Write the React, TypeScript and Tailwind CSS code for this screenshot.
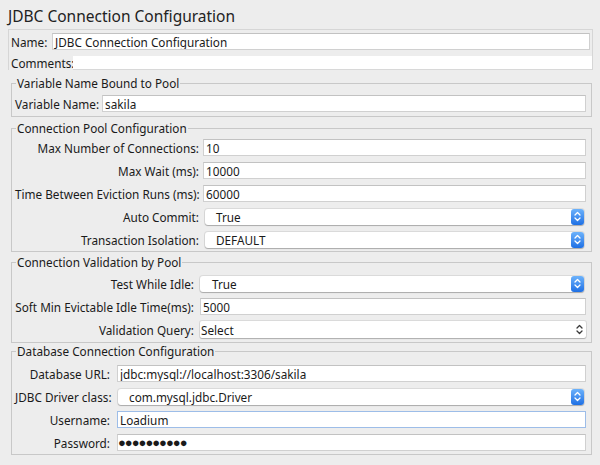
import React from 'react';

function Chevrons({ color }: { color: string }) {
  return (
    <svg width="7" height="11" viewBox="0 0 7 11" fill="none" stroke={color} strokeWidth="1.3" strokeLinecap="round" strokeLinejoin="round">
      <path d="M1 4 L3.5 1.5 L6 4" />
      <path d="M1 7 L3.5 9.5 L6 7" />
    </svg>
  );
}

function Input({ value = '', focused = false, children }: { value?: string; focused?: boolean; children?: React.ReactNode }) {
  return (
    <div
      className={
        'flex-1 h-[17px] bg-white border flex items-center px-[2px] whitespace-nowrap overflow-hidden ' +
        (focused ? 'border-[#9dbde8]' : 'border-[#d0d0d0] border-t-[#c2c2c2]')
      }
    >
      {children ?? value}
    </div>
  );
}

function Select({ value, textPad }: { value: string; textPad: string }) {
  return (
    <div className="flex-1 h-[17px] flex items-center pr-[2px]">
      <div className="w-full h-[16px] bg-white rounded-[3px] shadow-[0_0_0_1px_rgba(0,0,0,0.08),0_1px_1px_rgba(0,0,0,0.22)] flex items-center">
        <span className={textPad}>{value}</span>
        <div className="ml-auto h-[16px] w-[13px] rounded-[3px] bg-gradient-to-b from-[#6cb2fb] to-[#1d6fe4] flex items-center justify-center">
          <Chevrons color="#ffffff" />
        </div>
      </div>
    </div>
  );
}

function Combo({ value }: { value: string }) {
  return (
    <div className="flex-1 h-[17px] bg-white rounded-[2px] shadow-[0_0_0_1px_rgba(0,0,0,0.08),0_1px_1px_rgba(0,0,0,0.2)] flex items-center pl-[1px]">
      <span>{value}</span>
      <div className="ml-auto w-[13px] h-full flex items-center justify-center">
        <Chevrons color="#3a3a3a" />
      </div>
    </div>
  );
}

function Row({ label, labelCls, children }: { label: string; labelCls: string; children: React.ReactNode }) {
  return (
    <div className="flex items-center h-[17px]">
      <div className={'text-right whitespace-nowrap shrink-0 ' + labelCls}>{label}</div>
      {children}
    </div>
  );
}

function Group({ title, cls, inner, children }: { title: string; cls: string; inner: string; children: React.ReactNode }) {
  return (
    <fieldset className={'ml-[11px] w-[581px] border border-[#c8c8c8] ' + cls}>
      <legend className="ml-[4px] px-[1px] leading-[14px]">{title}</legend>
      <div className={'flex flex-col gap-[6px] pl-[3px] pr-[5px] ' + inner}>{children}</div>
    </fieldset>
  );
}

export default function App() {
  return (
    <div className="w-[600px] h-[465px] bg-[#ededed] overflow-hidden text-[11.75px] leading-[14px] text-[#1a1a1a] font-['Noto_Sans',sans-serif]">
      <div className="h-[29px] pt-[6px] pl-[8px] text-[15.5px] leading-[20px] text-[#222]">JDBC Connection Configuration</div>
      <div className="ml-[8px] w-[585px] border border-b-0 border-[#d6d6d6]">
        <div className="flex items-center pt-[3px] pl-[2px] pr-[2px]">
          <span className="w-[41px] shrink-0">Name:</span>
          <Input value="JDBC Connection Configuration" />
        </div>
        <div className="flex items-center h-[14px] mt-[6px] pl-[2px]">
          <span className="w-[62px] shrink-0">Comments:</span>
          <div className="flex-1 h-[14px] bg-white border-b border-[#d8d8d8]" />
        </div>
      </div>

      <Group title="Variable Name Bound to Pool" cls="mt-[6px]" inner="pt-[5px] pb-[4px]">
        <Row label="Variable Name:" labelCls="mr-[3px]">
          <Input value="sakila" />
        </Row>
      </Group>

      <Group title="Connection Pool Configuration" cls="mt-[4px]" inner="pt-[4px] pb-[3px]">
        <Row label="Max Number of Connections:" labelCls="w-[184px] mr-[4px]">
          <Input value="10" />
        </Row>
        <Row label="Max Wait (ms):" labelCls="w-[184px] mr-[4px]">
          <Input value="10000" />
        </Row>
        <Row label="Time Between Eviction Runs (ms):" labelCls="w-[184px] mr-[4px]">
          <Input value="60000" />
        </Row>
        <Row label="Auto Commit:" labelCls="w-[184px] mr-[6px]">
          <Select value="True" textPad="pl-[11px]" />
        </Row>
        <Row label="Transaction Isolation:" labelCls="w-[184px] mr-[6px]">
          <Select value="DEFAULT" textPad="pl-[11px]" />
        </Row>
      </Group>

      <Group title="Connection Validation by Pool" cls="mt-[3px]" inner="pt-[6px] pb-[4px]">
        <Row label="Test While Idle:" labelCls="w-[179px] mr-[6px]">
          <Select value="True" textPad="pl-[12px]" />
        </Row>
        <Row label="Soft Min Evictable Idle Time(ms):" labelCls="w-[179px] mr-[6px]">
          <Input value="5000" />
        </Row>
        <Row label="Validation Query:" labelCls="w-[179px] mr-[6px]">
          <Combo value="Select" />
        </Row>
      </Group>

      <Group title="Database Connection Configuration" cls="mt-[1px]" inner="pt-[7px] pb-[3px]">
        <Row label="Database URL:" labelCls="w-[95px] mr-[7px]">
          <Input value="jdbc:mysql://localhost:3306/sakila" />
        </Row>
        <Row label="JDBC Driver class:" labelCls="w-[95px] mr-[8px]">
          <Select value="com.mysql.jdbc.Driver" textPad="pl-[11px]" />
        </Row>
        <Row label="Username:" labelCls="w-[95px] mr-[7px]">
          <Input value="Loadium" focused />
        </Row>
        <Row label="Password:" labelCls="w-[95px] mr-[7px]">
          <Input>
            <span className="-ml-[2px] text-[13px] tracking-[-1px] leading-[15px]">●●●●●●●●●●</span>
          </Input>
        </Row>
      </Group>
    </div>
  );
}
